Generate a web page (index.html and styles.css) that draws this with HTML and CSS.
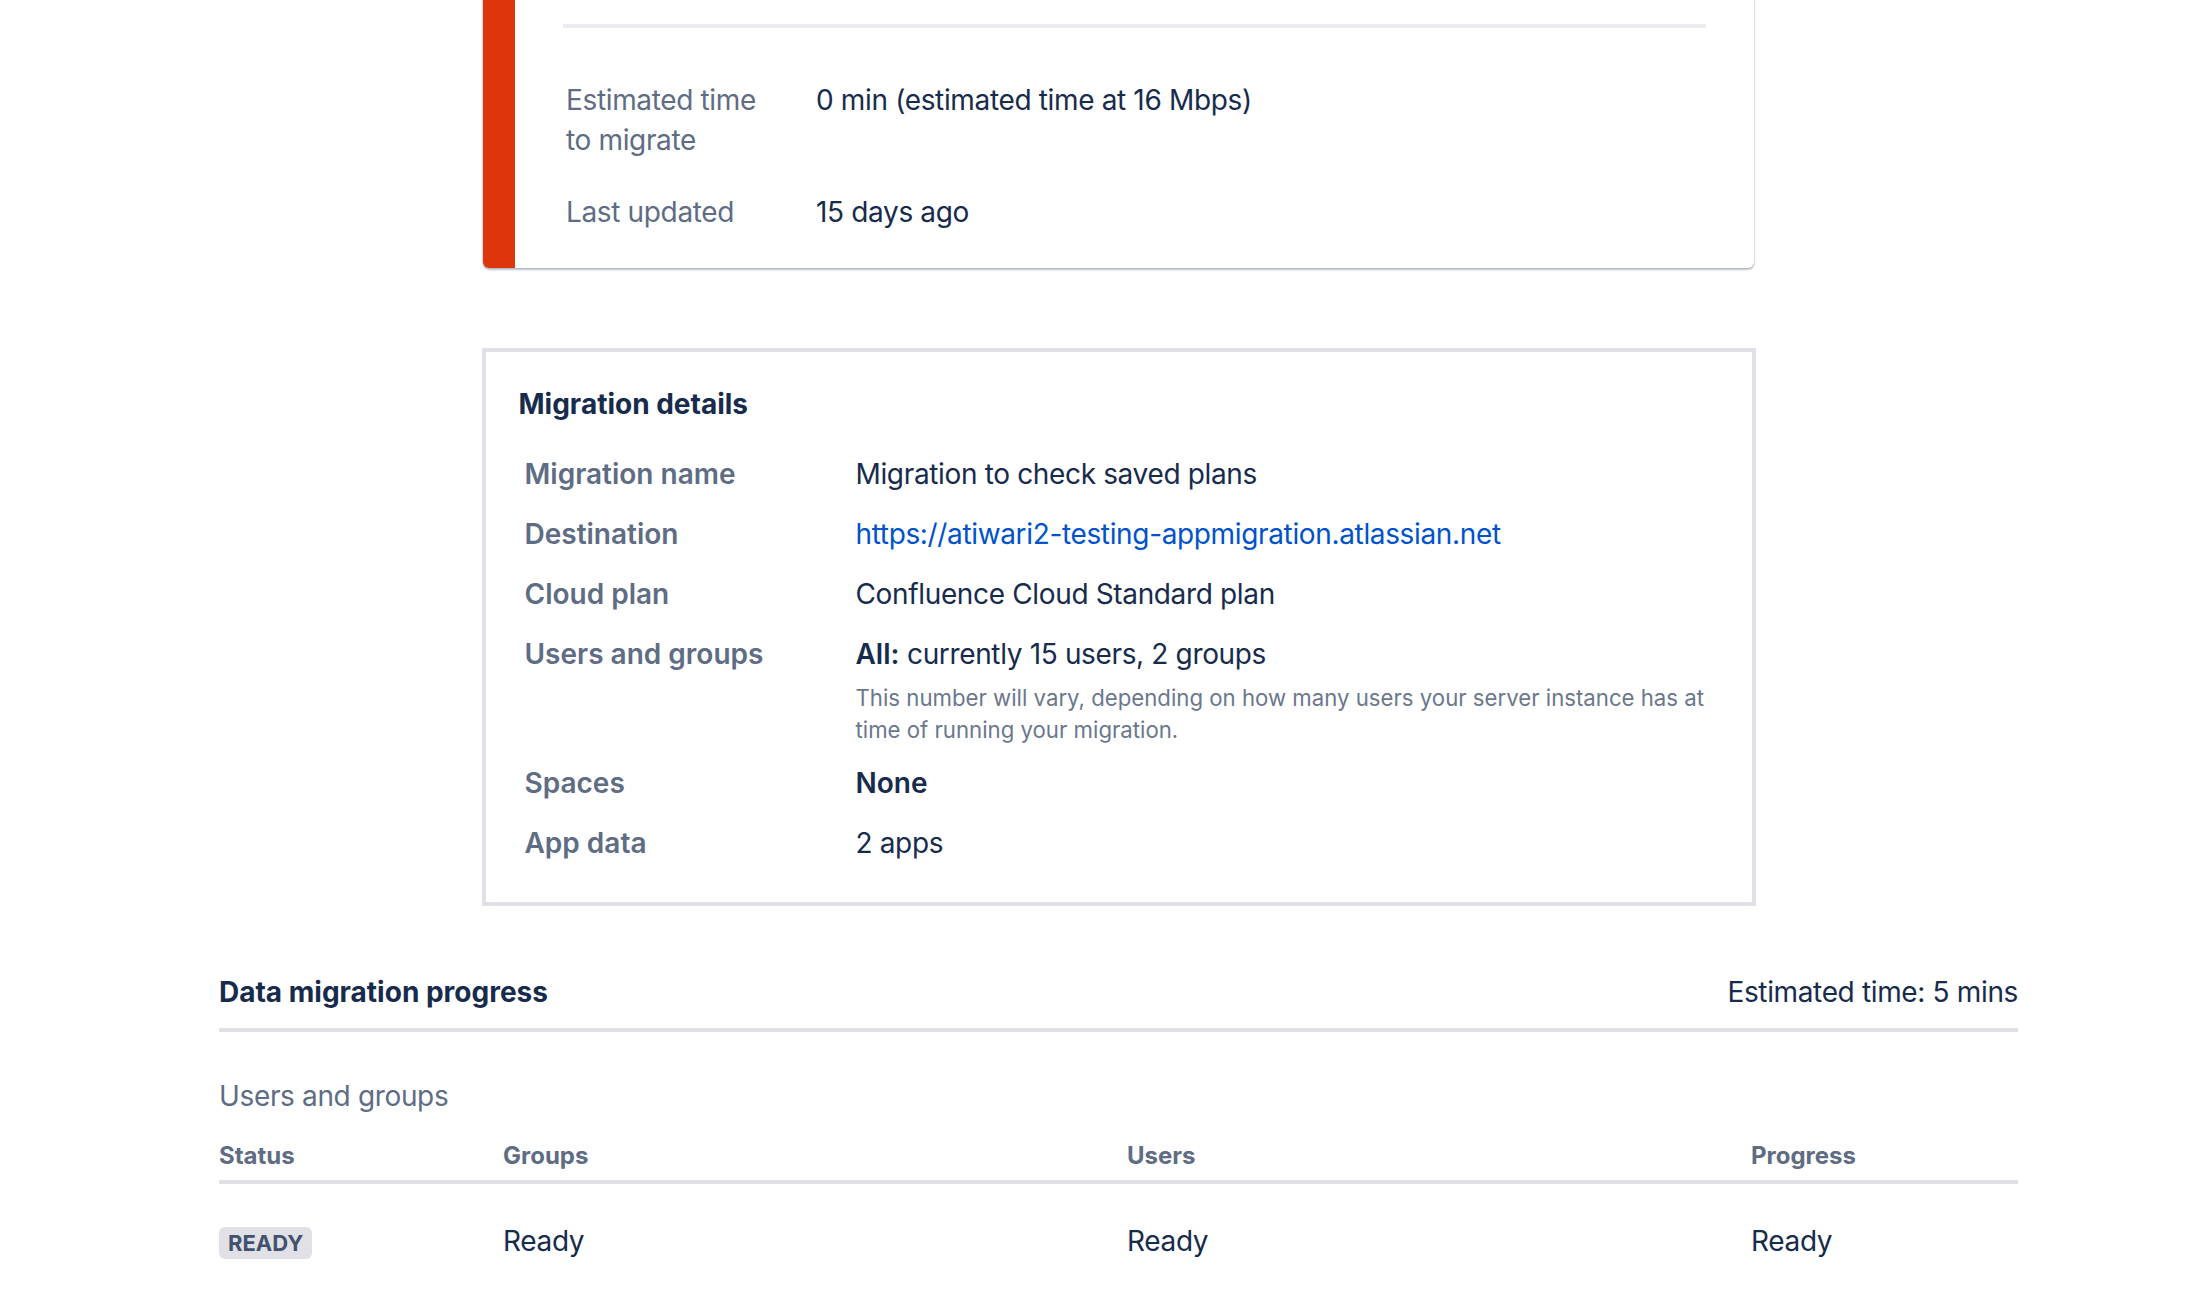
FILE: index.html
```html
<!DOCTYPE html>
<html lang="en">
<head>
  <meta charset="UTF-8">
  <title>Migration | Review</title>
  <link rel="stylesheet" href="styles.css">
</head>
<body>
  <div class="page">

    <section class="summary-card">
      <div class="summary-stripe"></div>
      <div class="summary-body">
        <hr class="summary-divider">
        <dl class="summary-grid">
          <dt>Estimated time to migrate</dt>
          <dd>0 min (estimated time at 16 Mbps)</dd>
          <dt>Last updated</dt>
          <dd>15 days ago</dd>
        </dl>
      </div>
    </section>

    <section class="details-card">
      <h3 class="details-title">Migration details</h3>
      <div class="details-grid">
        <div class="details-label">Migration name</div>
        <div class="details-value">Migration to check saved plans</div>

        <div class="details-label">Destination</div>
        <div class="details-value"><a href="#">https://atiwari2-testing-appmigration.atlassian.net</a></div>

        <div class="details-label">Cloud plan</div>
        <div class="details-value">Confluence Cloud Standard plan</div>

        <div class="details-label">Users and groups</div>
        <div class="details-value">
          <strong>All:</strong> currently 15 users, 2 groups
          <p class="details-note">This number will vary, depending on how many users your server instance has at time of running your migration.</p>
        </div>

        <div class="details-label">Spaces</div>
        <div class="details-value"><strong>None</strong></div>

        <div class="details-label">App data</div>
        <div class="details-value">2 apps</div>
      </div>
    </section>

    <section class="progress">
      <div class="progress-head">
        <h3 class="progress-title">Data migration progress</h3>
        <span class="progress-estimate">Estimated time: 5 mins</span>
      </div>

      <h4 class="progress-subtitle">Users and groups</h4>
      <table class="progress-table">
        <colgroup>
          <col class="col-status">
          <col class="col-wide">
          <col class="col-wide">
          <col>
        </colgroup>
        <thead>
          <tr>
            <th>Status</th>
            <th>Groups</th>
            <th>Users</th>
            <th>Progress</th>
          </tr>
        </thead>
        <tbody>
          <tr>
            <td><span class="lozenge">Ready</span></td>
            <td>Ready</td>
            <td>Ready</td>
            <td>Ready</td>
          </tr>
        </tbody>
      </table>
    </section>

  </div>
</body>
</html>
```

FILE: styles.css
```css
* {
  box-sizing: border-box;
}
body {
  margin: 0;
  background: #fff;
  font-family: 'Inter', 'Noto Sans', sans-serif;
  font-size: 28px;
  line-height: 40px;
  letter-spacing: -0.35px;
  color: #172b4d;
}

.page {
  width: 1799px;
  margin-left: 219px;
  padding-bottom: 80px;
}

/* summary card, scrolled half out of view */
.summary-card {
  display: flex;
  width: 1271px;
  margin: -40px auto 0 auto;
  border-radius: 0 0 6px 6px;
  overflow: hidden;
  background: #fff;
  box-shadow: 0 2px 2px rgba(9, 30, 66, 0.25), 0 0 2px rgba(9, 30, 66, 0.31);
}
.summary-stripe {
  width: 32px;
  flex-shrink: 0;
  background: #de350b;
}
.summary-body {
  flex: 1;
  padding: 64px 48px 36px 48px;
}
.summary-divider {
  margin: 0;
  height: 4px;
  border: none;
  background: #ebecf0;
}
.summary-grid {
  display: grid;
  grid-template-columns: 210px 1fr;
  column-gap: 40px;
  row-gap: 32px;
  margin: 52px 0 0 3px;
}
.summary-grid dt {
  color: #5e6c84;
}
.summary-grid dd {
  margin: 0;
}

/* migration details */
.details-card {
  width: 1274px;
  margin: 80px auto 0 auto;
  border: 4px solid #dfe1e6;
  padding: 32px 33px 39px 33px;
}
.details-title {
  margin: 0;
  font-size: 28px;
  font-weight: 700;
  letter-spacing: 0;
  color: #172b4d;
}
.details-grid {
  display: grid;
  grid-template-columns: 331px 1fr;
  row-gap: 20px;
  margin: 30px 0 0 6px;
}
.details-label {
  font-weight: 600;
  letter-spacing: 0;
  color: #5e6c84;
}
.details-value strong {
  font-weight: 600;
  letter-spacing: 0;
}
.details-value a {
  color: #0052cc;
  text-decoration: none;
}
.details-note {
  margin: 8px 0 -3px 0;
  font-size: 22.2px;
  line-height: 32px;
  letter-spacing: 0;
  color: #6b778c;
}

/* progress */
.progress {
  margin-top: 66px;
}
.progress-head {
  display: flex;
  justify-content: space-between;
  align-items: baseline;
  padding-bottom: 16px;
  border-bottom: 4px solid #dfe1e6;
}
.progress-title {
  margin: 0;
  font-size: 28px;
  font-weight: 700;
  letter-spacing: 0;
}
.progress-subtitle {
  margin: 44px 0 15px 0;
  font-size: 28px;
  font-weight: 400;
  color: #5e6c84;
}
.progress-table {
  width: 100%;
  border-collapse: collapse;
  table-layout: fixed;
}
.col-status {
  width: 284px;
}
.col-wide {
  width: 624px;
}
.progress-table th {
  text-align: left;
  font-size: 24px;
  line-height: 32px;
  font-weight: 700;
  letter-spacing: 0;
  color: #5e6c84;
  padding: 9px 0 8px 0;
  border-bottom: 4px solid #dfe1e6;
}
.progress-table td {
  padding: 37px 0 8px 0;
  vertical-align: middle;
}
.lozenge {
  display: inline-block;
  height: 32px;
  line-height: 32px;
  padding: 0 9px;
  border-radius: 6px;
  background: #dfe1e6;
  color: #42526e;
  font-size: 22px;
  font-weight: 700;
  letter-spacing: 0;
  text-transform: uppercase;
  vertical-align: middle;
}
```
